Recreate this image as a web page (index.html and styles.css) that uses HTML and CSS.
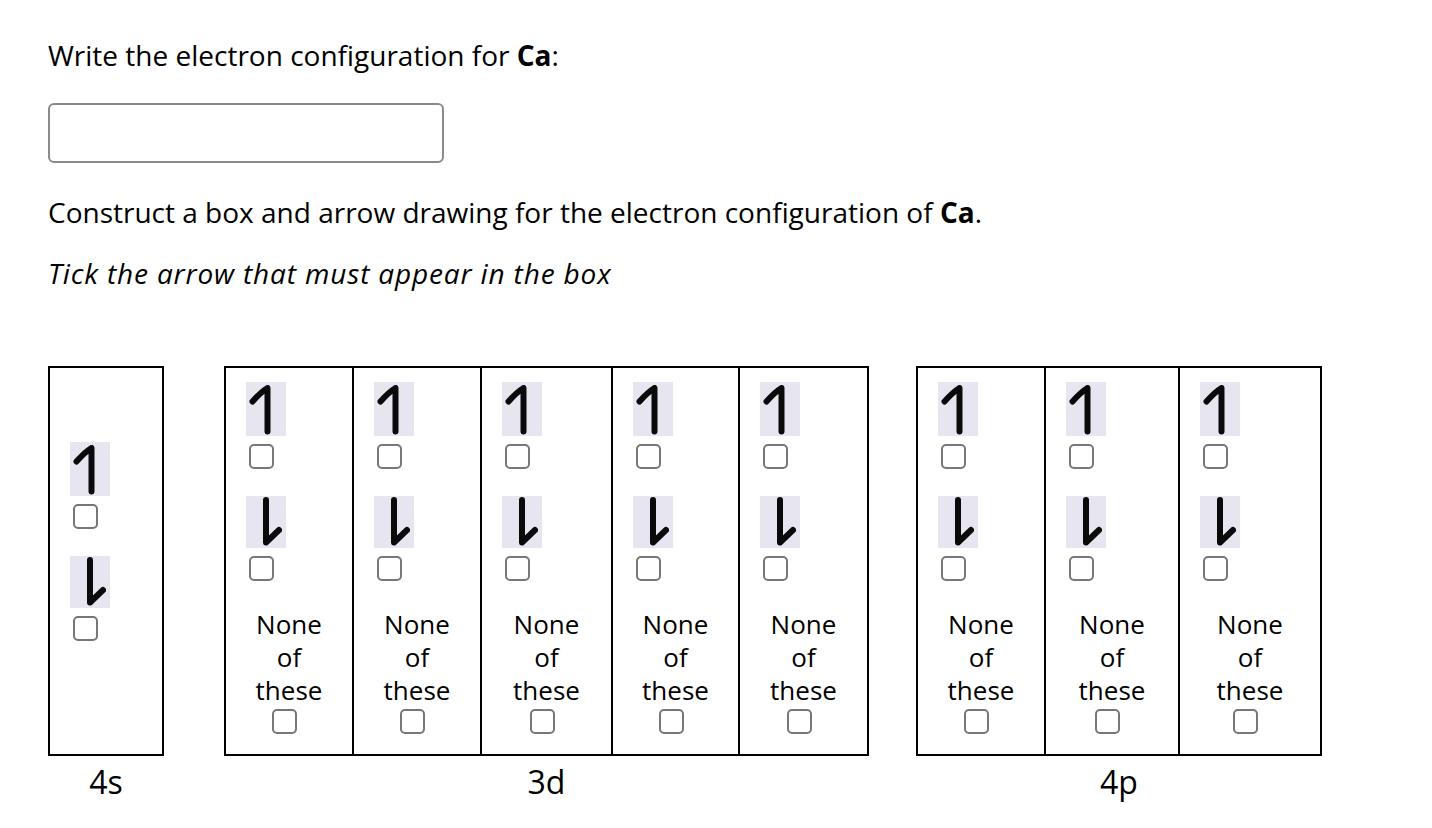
FILE: index.html
```html
<!DOCTYPE html>
<html lang="en">
<head>
<meta charset="utf-8">
<title>Electron configuration – Ca</title>
<link rel="stylesheet" href="styles.css">
</head>
<body>
<main class="question">
  <p class="prompt">Write the electron configuration for <b>Ca</b>:</p>
  <input class="answer" type="text" aria-label="Electron configuration">

  <p class="prompt prompt-second">Construct a box and arrow drawing for the electron configuration of <b>Ca</b>.</p>
  <p class="prompt prompt-hint"><i>Tick the arrow that must appear in the box</i></p>

  <div class="diagram">
    <!-- 4s: a single orbital -->
    <section class="shell shell-4s">
      <div class="orbitals orbitals-4s">
        <div class="orbital orbital-single">
          <svg class="arrow" viewBox="0 0 40 54" aria-label="spin up"><path d="M6.5 19.5 Q15 10 21.5 6 L21.5 49.5"/></svg>
          <input class="tick" type="checkbox">
          <svg class="arrow arrow-down" viewBox="0 0 40 52" aria-label="spin down"><path d="M20 4 L20 46.5 L33 34"/></svg>
          <input class="tick" type="checkbox">
        </div>
      </div>
      <div class="shell-label">4s</div>
    </section>

    <!-- 3d: five orbitals -->
    <section class="shell shell-3d">
      <div class="orbitals orbitals-3d">
        <div class="orbital">
          <div class="pick">
            <svg class="arrow" viewBox="0 0 40 54"><path d="M6.5 19.5 Q15 10 21.5 6 L21.5 49.5"/></svg>
            <input class="tick" type="checkbox">
            <svg class="arrow arrow-down" viewBox="0 0 40 52"><path d="M20 4 L20 46.5 L33 34"/></svg>
            <input class="tick" type="checkbox">
          </div>
          <div class="none"><span>None<br>of<br>these</span><input class="tick tick-none" type="checkbox"></div>
        </div>
        <div class="orbital">
          <div class="pick">
            <svg class="arrow" viewBox="0 0 40 54"><path d="M6.5 19.5 Q15 10 21.5 6 L21.5 49.5"/></svg>
            <input class="tick" type="checkbox">
            <svg class="arrow arrow-down" viewBox="0 0 40 52"><path d="M20 4 L20 46.5 L33 34"/></svg>
            <input class="tick" type="checkbox">
          </div>
          <div class="none"><span>None<br>of<br>these</span><input class="tick tick-none" type="checkbox"></div>
        </div>
        <div class="orbital">
          <div class="pick">
            <svg class="arrow" viewBox="0 0 40 54"><path d="M6.5 19.5 Q15 10 21.5 6 L21.5 49.5"/></svg>
            <input class="tick" type="checkbox">
            <svg class="arrow arrow-down" viewBox="0 0 40 52"><path d="M20 4 L20 46.5 L33 34"/></svg>
            <input class="tick" type="checkbox">
          </div>
          <div class="none"><span>None<br>of<br>these</span><input class="tick tick-none" type="checkbox"></div>
        </div>
        <div class="orbital">
          <div class="pick">
            <svg class="arrow" viewBox="0 0 40 54"><path d="M6.5 19.5 Q15 10 21.5 6 L21.5 49.5"/></svg>
            <input class="tick" type="checkbox">
            <svg class="arrow arrow-down" viewBox="0 0 40 52"><path d="M20 4 L20 46.5 L33 34"/></svg>
            <input class="tick" type="checkbox">
          </div>
          <div class="none"><span>None<br>of<br>these</span><input class="tick tick-none" type="checkbox"></div>
        </div>
        <div class="orbital">
          <div class="pick">
            <svg class="arrow" viewBox="0 0 40 54"><path d="M6.5 19.5 Q15 10 21.5 6 L21.5 49.5"/></svg>
            <input class="tick" type="checkbox">
            <svg class="arrow arrow-down" viewBox="0 0 40 52"><path d="M20 4 L20 46.5 L33 34"/></svg>
            <input class="tick" type="checkbox">
          </div>
          <div class="none"><span>None<br>of<br>these</span><input class="tick tick-none" type="checkbox"></div>
        </div>
      </div>
      <div class="shell-label">3d</div>
    </section>

    <!-- 4p: three orbitals -->
    <section class="shell shell-4p">
      <div class="orbitals orbitals-4p">
        <div class="orbital">
          <div class="pick">
            <svg class="arrow" viewBox="0 0 40 54"><path d="M6.5 19.5 Q15 10 21.5 6 L21.5 49.5"/></svg>
            <input class="tick" type="checkbox">
            <svg class="arrow arrow-down" viewBox="0 0 40 52"><path d="M20 4 L20 46.5 L33 34"/></svg>
            <input class="tick" type="checkbox">
          </div>
          <div class="none"><span>None<br>of<br>these</span><input class="tick tick-none" type="checkbox"></div>
        </div>
        <div class="orbital">
          <div class="pick">
            <svg class="arrow" viewBox="0 0 40 54"><path d="M6.5 19.5 Q15 10 21.5 6 L21.5 49.5"/></svg>
            <input class="tick" type="checkbox">
            <svg class="arrow arrow-down" viewBox="0 0 40 52"><path d="M20 4 L20 46.5 L33 34"/></svg>
            <input class="tick" type="checkbox">
          </div>
          <div class="none"><span>None<br>of<br>these</span><input class="tick tick-none" type="checkbox"></div>
        </div>
        <div class="orbital">
          <div class="pick">
            <svg class="arrow" viewBox="0 0 40 54"><path d="M6.5 19.5 Q15 10 21.5 6 L21.5 49.5"/></svg>
            <input class="tick" type="checkbox">
            <svg class="arrow arrow-down" viewBox="0 0 40 52"><path d="M20 4 L20 46.5 L33 34"/></svg>
            <input class="tick" type="checkbox">
          </div>
          <div class="none"><span>None<br>of<br>these</span><input class="tick tick-none" type="checkbox"></div>
        </div>
      </div>
      <div class="shell-label">4p</div>
    </section>
  </div>
</main>
</body>
</html>
```

FILE: styles.css
```css
html, body {
  margin: 0;
  padding: 0;
  background: #ffffff;
}

body {
  color: #000;
  font-family: "Open Sans", "Liberation Sans", sans-serif;
}

.question {
  padding: 39px 48px 0;
}

.prompt {
  margin: 0;
  font-size: 28px;
  line-height: 32px;
}

.prompt b {
  font-weight: 700;
}

.prompt i {
  letter-spacing: 0.85px;
}

.answer {
  display: block;
  box-sizing: border-box;
  width: 396px;
  height: 60px;
  margin: 32px 0 0;
  border: 2px solid #8a8a8a;
  border-radius: 6px;
  background: #fff;
  font: inherit;
}

.prompt-second {
  margin-top: 33px;
}

.prompt-hint {
  margin-top: 29px;
}

/* orbital diagram */
.diagram {
  display: flex;
  align-items: stretch;
  margin-top: 77px;
}

.shell {
  display: flex;
  flex-direction: column;
}

.shell-3d {
  margin-left: 60px;
}

.shell-4p {
  margin-left: 47px;
}

/* black grid background shows through the gaps as cell dividers */
.orbitals {
  flex: 1;
  display: grid;
  gap: 2px;
  border: 2px solid #000;
  background: #000;
}

.orbitals-4s {
  grid-template-columns: 112px;
}

.orbitals-3d {
  grid-template-columns: 126px 126px 129px 125px 127px;
}

.orbitals-4p {
  grid-template-columns: 126px 132px 140px;
}

.orbital {
  background: #fff;
  padding: 14px 0 20px;
}

.orbital-single {
  padding: 74px 0 0 20px;
}

.pick {
  padding-left: 20px;
}

.arrow {
  display: block;
  width: 40px;
  height: 54px;
  background: #e7e6f0;
}

.arrow-down {
  height: 52px;
  margin-top: 27px;
}

.arrow path {
  fill: none;
  stroke: #0a0a0a;
  stroke-width: 6;
  stroke-linecap: round;
  stroke-linejoin: round;
  filter: blur(0.5px);
}

.tick {
  -webkit-appearance: none;
  appearance: none;
  display: block;
  box-sizing: border-box;
  width: 25px;
  height: 25px;
  margin: 8px 0 0 3px;
  border: 2px solid #777;
  border-radius: 5px;
  background: #fff;
}

.none {
  display: flex;
  flex-direction: column;
  align-items: center;
  margin-top: 27px;
  text-align: center;
  font-size: 26px;
  line-height: 33px;
}

.tick-none {
  margin: 2px 9px 0 0;
}

.shell-label {
  margin-top: 6px;
  text-align: center;
  font-size: 32px;
  line-height: 40px;
}
```
